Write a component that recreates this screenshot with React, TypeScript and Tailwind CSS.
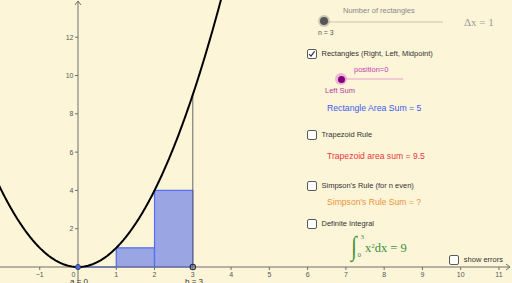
import React from 'react';

const X0 = 78;
const Y0 = 267;
const SX = 38.27;
const SY = 19.15;
const px = (x: number) => X0 + x * SX;
const py = (y: number) => Y0 - y * SY;

const AXIS = '#6e6e6e';

function Graph() {
  const pts: string[] = [];
  for (let x = -2.1; x <= 3.8; x += 0.02) {
    pts.push(`${px(x).toFixed(2)},${py(x * x).toFixed(2)}`);
  }
  const xTicks = [-1, 1, 2, 3, 4, 5, 6, 7, 8, 9, 10, 11];
  const yTicks = [2, 4, 6, 8, 10, 12];

  return (
    <svg className="absolute inset-0" width={512} height={283} viewBox="0 0 512 283">
      {/* rectangles, left sum n=3 */}
      <g fill="#9aa6e4" stroke="#5570f0" strokeWidth={1.3}>
        <rect x={px(1)} y={py(1)} width={SX} height={SY} />
        <rect x={px(2)} y={py(4)} width={SX} height={SY * 4} />
      </g>
      <line x1={px(0)} y1={Y0} x2={px(1)} y2={Y0} stroke="#5570f0" strokeWidth={1.6} />

      {/* axes */}
      <line x1={0} y1={Y0} x2={510} y2={Y0} stroke={AXIS} strokeWidth={1} />
      <polyline points="506,264 510,267 506,270" fill="none" stroke={AXIS} strokeWidth={1} />
      <line x1={X0} y1={1} x2={X0} y2={283} stroke={AXIS} strokeWidth={1} />
      <polyline points="75,5 78,1 81,5" fill="none" stroke={AXIS} strokeWidth={1} />

      {xTicks.map((t) => (
        <line key={`xt${t}`} x1={px(t)} y1={Y0} x2={px(t)} y2={Y0 + 3} stroke={AXIS} strokeWidth={1} />
      ))}
      {yTicks.map((t) => (
        <line key={`yt${t}`} x1={X0 - 3} y1={py(t)} x2={X0} y2={py(t)} stroke={AXIS} strokeWidth={1} />
      ))}

      <g fontFamily="'Liberation Sans', Arial, sans-serif" fontSize={7} fill="#555">
        {xTicks.map((t) => (
          <text key={`xl${t}`} x={px(t)} y={276.5} textAnchor="middle">
            {t < 0 ? `\u2212${-t}` : t}
          </text>
        ))}
        <text x={73.5} y={276.5} textAnchor="middle">0</text>
        {yTicks.map((t) => (
          <text key={`yl${t}`} x={73.5} y={py(t) + 2.5} textAnchor="end">
            {t}
          </text>
        ))}
      </g>

      {/* x = 3 line up to curve */}
      <line x1={px(3)} y1={Y0} x2={px(3)} y2={py(9)} stroke="#666" strokeWidth={1} />

      {/* f(x) = x^2 */}
      <polyline points={pts.join(' ')} fill="none" stroke="#000" strokeWidth={2} strokeLinejoin="round" />

      {/* points a, b */}
      <circle cx={px(0)} cy={Y0} r={2.6} fill="#4d6bd5" stroke="#2a3270" strokeWidth={0.8} />
      <circle cx={px(3)} cy={Y0} r={2.7} fill="none" stroke="#2a3050" strokeWidth={1.2} />

      <g fontFamily="'Liberation Sans', Arial, sans-serif" fontSize={8} fill="#333">
        <text x={70} y={284}>a = 0</text>
        <text x={185} y={284}>b = 3</text>
      </g>
    </svg>
  );
}

function Box({ checked = false }: { checked?: boolean }) {
  return (
    <div className="w-[9.5px] h-[9.5px] shrink-0 rounded-[2px] border border-[#5a5a5a] bg-white flex items-center justify-center">
      {checked && (
        <svg width="8" height="8" viewBox="0 0 8 8">
          <polyline points="1.2,4.2 3.2,6.2 7,1.2" fill="none" stroke="#333" strokeWidth={1.3} />
        </svg>
      )}
    </div>
  );
}

function CheckRow({ label, checked, mt }: { label: string; checked?: boolean; mt: string }) {
  return (
    <div className={`flex items-center h-[12px] pl-[7px] gap-[5px] ${mt}`}>
      <Box checked={checked} />
      <span className="text-[7.5px] leading-[12px] text-[#333]">{label}</span>
    </div>
  );
}

export default function App() {
  return (
    <div
      className="relative w-[512px] h-[283px] overflow-hidden bg-[#fdf5d8]"
      style={{ fontFamily: "'Liberation Sans', Arial, sans-serif" }}
    >
      <Graph />

      <div className="absolute top-0 left-[300px] w-[212px] h-[283px] flex flex-col">
        <div className="mt-[6px] h-[10px] pl-[43px] text-[7.5px] leading-[10px] text-[#888]">
          Number of rectangles
        </div>

        <div className="flex items-center h-[12px]">
          <div className="relative ml-[19px] w-[124px] h-[12px]">
            <div className="absolute left-[5px] right-0 top-[5px] h-[1.5px] bg-[#e4dac6]" />
            <div className="absolute left-[-1px] top-[-1px] w-[12px] h-[12px] rounded-full bg-[#b0aaa0]/60" />
            <div className="absolute left-[1px] top-[1px] w-[8px] h-[8px] rounded-full bg-[#555]" />
          </div>
          <span
            className="ml-[21px] text-[11px] leading-[12px] text-[#9a9a9a]"
            style={{ fontFamily: "'Liberation Serif', 'DejaVu Serif', serif" }}
          >
            Δx = 1
          </span>
        </div>

        <div className="h-[10px] pl-[18px] text-[7px] leading-[10px] text-[#555]">n = 3</div>

        <CheckRow label="Rectangles (Right, Left, Midpoint)" checked mt="mt-[10px]" />

        <div className="mt-[5px] h-[9px] pl-[54px] text-[7.5px] leading-[9px] text-[#c23fb0]">position=0</div>

        <div className="h-[10px]">
          <div className="relative ml-[36px] w-[67px] h-[10px]">
            <div className="absolute left-[5px] right-0 top-[4px] h-[1.5px] bg-[#f3c9d4]" />
            <div className="absolute left-[-1px] top-[-1px] w-[12px] h-[12px] rounded-full bg-[#e59ad2]/70" />
            <div className="absolute left-[1.5px] top-[1.5px] w-[7px] h-[7px] rounded-full bg-[#800080]" />
          </div>
        </div>

        <div className="mt-[2px] h-[10px] pl-[25px] text-[7.5px] leading-[10px] text-[#b23c9e]">Left Sum</div>

        <div className="mt-[6px] h-[12px] pl-[27px] text-[8.7px] leading-[12px] text-[#3c5cf0]">
          Rectangle Area Sum = 5
        </div>

        <CheckRow label="Trapezoid Rule" mt="mt-[15px]" />

        <div className="mt-[9px] h-[12px] pl-[27px] text-[8.6px] leading-[12px] text-[#e8383d]">
          Trapezoid area sum = 9.5
        </div>

        <CheckRow label="Simpson's Rule (for n even)" mt="mt-[18px]" />

        <div className="mt-[4px] h-[12px] pl-[27px] text-[8.6px] leading-[12px] text-[#eb9440]">
          Simpson's Rule Sum = ?
        </div>

        <CheckRow label="Definite Integral" mt="mt-[10px]" />

        <div className="mt-[2px] h-[34px] flex">
          <div
            className="ml-[50px] h-[28px] flex items-center text-[#3b8f3b]"
            style={{ fontFamily: "'Liberation Serif', 'DejaVu Serif', serif" }}
          >
            <span className="inline-block text-[27px] leading-[28px] scale-x-75">∫</span>
            <span className="flex flex-col justify-between h-[26px] ml-[0px] text-[7px] leading-[8px]">
              <span className="pl-[3px]">3</span>
              <span>0</span>
            </span>
            <span className="ml-[1px] mt-[3px] text-[12.5px] leading-[26px]">
              x<sup className="text-[7px]">2</sup>dx = 9
            </span>
          </div>
          <div className="ml-auto mr-[9px] self-end flex items-center gap-[5px] h-[12px]">
            <Box />
            <span className="text-[7.5px] leading-[12px] text-[#333]">show errors</span>
          </div>
        </div>
      </div>
    </div>
  );
}
